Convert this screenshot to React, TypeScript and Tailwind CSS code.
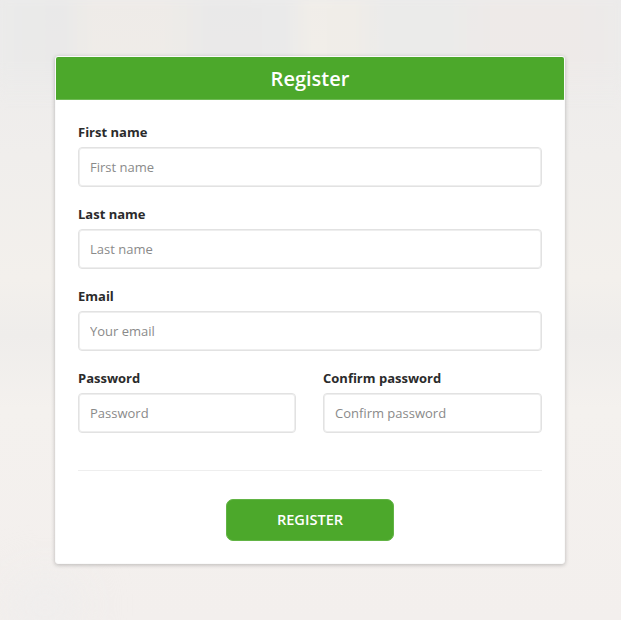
const FIELD_LABEL = "text-[13px] leading-[18px] font-bold text-[#2b2b2b]";

function Field({
  label,
  placeholder,
  type = "text",
}: {
  label: string;
  placeholder: string;
  type?: string;
}) {
  return (
    <div className="flex flex-col gap-[6px]">
      <label className={FIELD_LABEL}>{label}</label>
      <input
        type={type}
        placeholder={placeholder}
        className="h-10 w-full rounded-[4px] border border-[#e2e2e2] bg-white px-[11px] text-[13px] text-[#444] shadow-[inset_0_0_0_1px_#eeeeee] outline-none placeholder:text-[#8a8a8a]"
      />
    </div>
  );
}

export default function App() {
  return (
    <div className="relative h-[620px] w-full overflow-hidden bg-[linear-gradient(180deg,#ecebeb_0%,#f0eeec_25%,#f3f0ec_45%,#efedeb_54%,#f4f1ee_66%,#f3efed_100%)] font-['Open_Sans','Noto_Sans',sans-serif]">
      {/* blurred photo behind the card */}
      <div className="absolute inset-x-0 top-0 h-[110px] bg-[linear-gradient(90deg,#ebebea_0%,#e9e9e9_10%,#f0ece8_15%,#f0ece8_26%,#e9e9e9_34%,#eaeaea_46%,#f3efe9_50%,#f2eee8_57%,#ebebea_62%,#ebebea_72%,#efeae8_80%,#efeae8_92%,#ecebea_100%)] opacity-70 blur-[3px] [mask-image:linear-gradient(180deg,black_55%,transparent)]" />
      <div className="absolute bottom-[-10px] left-[10px] h-[50px] w-[70px] rounded-full bg-[#eeeded] blur-xl" />

      <div className="relative pl-[55px] pt-[56px]">
        <div className="w-[510px] overflow-hidden rounded-[3px] border border-[#fafafa] bg-white shadow-[0_1px_4px_rgba(0,0,0,0.24)]">
          <h1 className="flex h-[43px] items-center justify-center border-b border-[#6fba55] bg-[#4ca82b] pt-[1px] text-[20px] font-semibold text-white">
            Register
          </h1>
          <form className="flex flex-col gap-[18px] px-[22px] pt-[23px]">
            <Field label="First name" placeholder="First name" />
            <Field label="Last name" placeholder="Last name" />
            <Field label="Email" placeholder="Your email" type="email" />
            <div className="grid grid-cols-[218px_219px] gap-[27px]">
              <Field label="Password" placeholder="Password" type="password" />
              <Field label="Confirm password" placeholder="Confirm password" type="password" />
            </div>
          </form>
          <div className="mx-[22px] mt-[37px] border-t border-[#eeeeee]" />
          <div className="flex justify-center pb-[22px] pt-[28px]">
            <button className="h-[42px] w-[168px] rounded-[7px] border border-[#62b445] bg-[#4ca82b] text-[14.6px] font-semibold text-white">
              REGISTER
            </button>
          </div>
        </div>
      </div>
    </div>
  );
}
